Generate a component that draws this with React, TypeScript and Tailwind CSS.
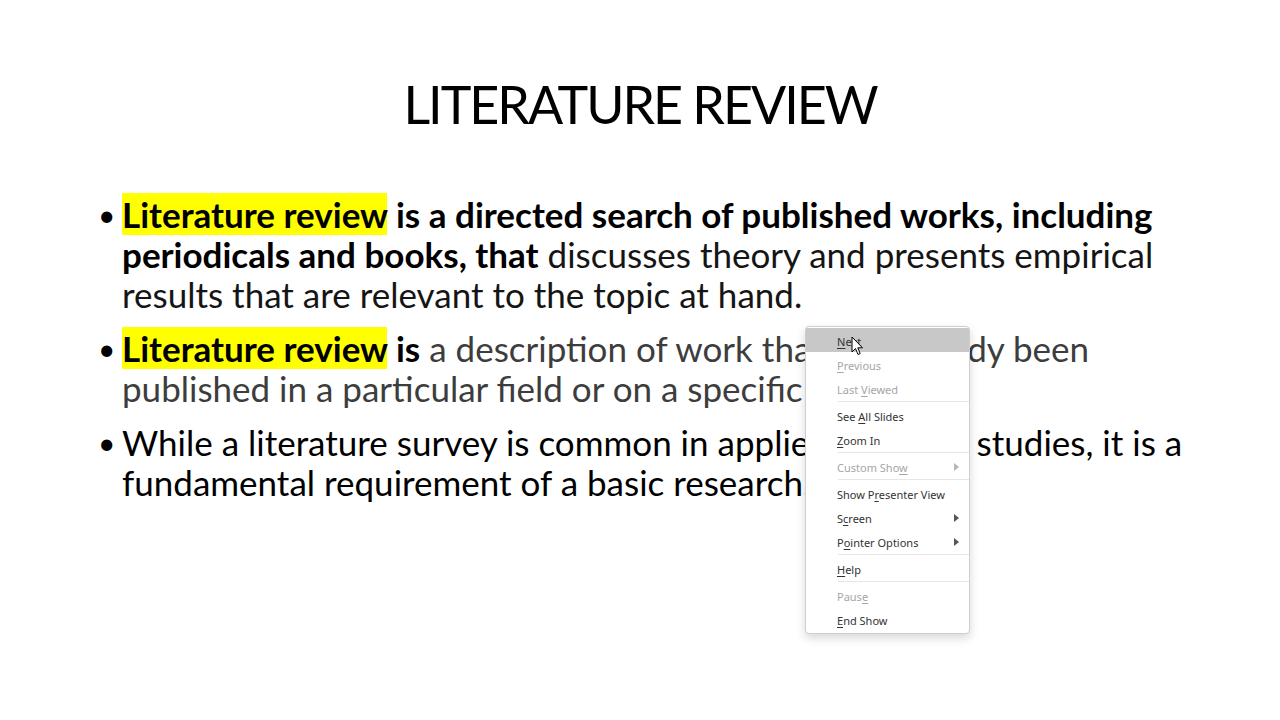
import React from 'react';

type Item =
  | { kind: 'sep' }
  | { kind: 'item'; label: string; key: number; disabled?: boolean; sub?: boolean; active?: boolean };

const menu: Item[] = [
  { kind: 'item', label: 'Next', key: 0, active: true },
  { kind: 'item', label: 'Previous', key: 0, disabled: true },
  { kind: 'item', label: 'Last Viewed', key: 5, disabled: true },
  { kind: 'sep' },
  { kind: 'item', label: 'See All Slides', key: 4 },
  { kind: 'item', label: 'Zoom In', key: 0 },
  { kind: 'sep' },
  { kind: 'item', label: 'Custom Show', key: 10, disabled: true, sub: true },
  { kind: 'sep' },
  { kind: 'item', label: 'Show Presenter View', key: 6 },
  { kind: 'item', label: 'Screen', key: 1, sub: true },
  { kind: 'item', label: 'Pointer Options', key: 1, sub: true },
  { kind: 'sep' },
  { kind: 'item', label: 'Help', key: 0 },
  { kind: 'sep' },
  { kind: 'item', label: 'Pause', key: 4, disabled: true },
  { kind: 'item', label: 'End Show', key: 0 },
];

function Label({ text, k }: { text: string; k: number }) {
  return (
    <span>
      {text.slice(0, k)}
      <span className="underline underline-offset-2">{text[k]}</span>
      {text.slice(k + 1)}
    </span>
  );
}

function ContextMenu() {
  return (
    <div className="absolute left-[805px] top-[326px] w-[165px] rounded-[4px] border border-[#cfcfcf] bg-white pt-[1px] pb-[2px] shadow-[0_4px_10px_rgba(0,0,0,0.16)] font-['Noto_Sans',sans-serif] text-[11px]">
      {menu.map((m, i) =>
        m.kind === 'sep' ? (
          <div key={i} className="ml-[32px] my-[1px] h-px bg-[#e6e6e6]" />
        ) : (
          <div
            key={i}
            className={`relative flex h-6 items-center pl-[31px] pt-[4px] ${
              m.active ? 'bg-[#c8c8c8]' : ''
            } ${m.disabled ? 'text-[#a6a6a6]' : 'text-[#333333]'}`}
          >
            <Label text={m.label} k={m.key} />
            {m.sub && (
              <svg
                className="absolute right-[10px] top-[9px]"
                width="5"
                height="8"
                viewBox="0 0 5 8"
              >
                <path d="M0 0 L5 4 L0 8 Z" fill={m.disabled ? '#b5b5b5' : '#555555'} />
              </svg>
            )}
          </div>
        )
      )}
    </div>
  );
}

function Cursor() {
  return (
    <svg className="absolute left-[851px] top-[336px]" width="13" height="20" viewBox="0 0 13 20">
      <path
        d="M1 1 L1 16 L4.5 12.5 L7 18.5 L9.2 17.5 L6.8 11.8 L11.5 11.8 Z"
        fill="white"
        stroke="black"
        strokeWidth="1"
        strokeLinejoin="round"
      />
    </svg>
  );
}

function Bullet({ children }: { children: React.ReactNode }) {
  return (
    <div className="flex">
      <span className="w-[24px] shrink-0 -ml-[2px] text-[30px]">•</span>
      <div className="whitespace-nowrap">{children}</div>
    </div>
  );
}

export default function App() {
  return (
    <div className="relative h-[720px] w-[1280px] overflow-hidden bg-white font-['Lato',sans-serif]">
      <h1 className="pt-[74px] text-center text-[52px] leading-[60px] tracking-[-2px] text-black">LITERATURE REVIEW</h1>
      <div className="mt-[60px] flex flex-col gap-[14px] pl-[100px] text-[35px] leading-[40px] text-black">
        <Bullet>
          <span className="font-bold">
            <span className="bg-[#ffff00]">Literature review</span> is a directed search of published works, including
            <br />
            periodicals and books, that
          </span>
          <span className="text-[#151515]">
            {' '}discusses theory and presents empirical
            <br />
            results that are relevant to the topic at hand.
          </span>
        </Bullet>
        <Bullet>
          <span className="font-bold">
            <span className="bg-[#ffff00]">Literature review</span> is
          </span>
          <span className="text-[#3d3d3d]">
            {' '}a description of work that has already been
            <br />
            published in a particular field or on a specific topic.
          </span>
        </Bullet>
        <Bullet>
          While a literature survey is common in applied research studies, it is a
          <br />
          fundamental requirement of a basic research.
        </Bullet>
      </div>
      <ContextMenu />
      <Cursor />
    </div>
  );
}
